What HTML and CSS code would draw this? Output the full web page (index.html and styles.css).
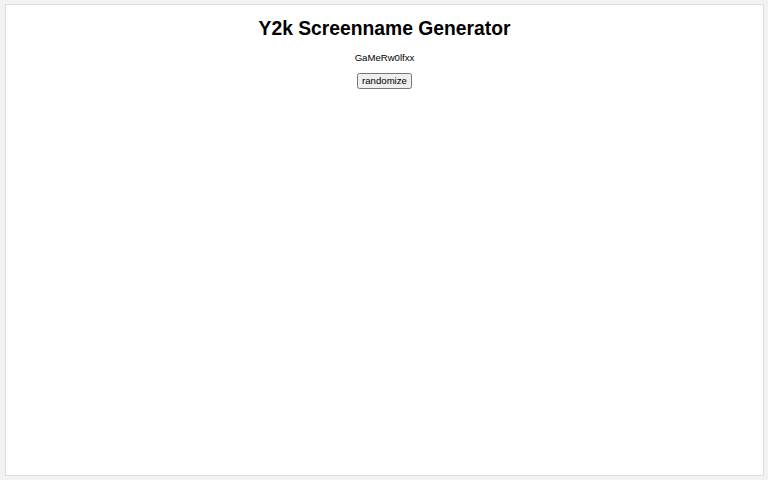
FILE: index.html
```html
<!DOCTYPE html>
<html lang="en">
<head>
  <meta charset="UTF-8">
  <title>Y2k Screenname Generator</title>
  <link rel="stylesheet" href="styles.css">
</head>
<body>
  <div class="panel">
    <h1>Y2k Screenname Generator</h1>
    <p id="naam">GaMeRw0lfxx</p>
    <button id="randomize">randomize</button>
  </div>

  <script>
    const namen = ['GaMeRw0lfxx', 'xXsk8erB0iXx', 'b4by_gurl99', 'DaRkAnGeL2k', 'sPaRkLeKiTtY'];
    const naam = document.getElementById('naam');
    document.getElementById('randomize').addEventListener('click', () => {
      naam.textContent = namen[Math.floor(Math.random() * namen.length)];
    });
  </script>
</body>
</html>
```

FILE: styles.css
```css
html, body { height: 100%; }
body { margin: 0; padding: 4px 4px 4px 5px; box-sizing: border-box; background: #f2f2f2; font-family: "Liberation Sans", Arial, sans-serif; }
.panel {
  height: 100%;
  box-sizing: border-box;
  background: #fff;
  border: 1px solid #dcdcdc;
  text-align: center;
}
h1 { font-size: 19.3px; margin: 12px 0 0; line-height: 24px; }
#naam { font-size: 9.6px; margin: 11px 0 0; line-height: 12px; }
button { margin-top: 9px; font-family: "Liberation Sans", Arial, sans-serif; font-size: 9.6px; line-height: 10px; padding: 1px 3px; }
```
